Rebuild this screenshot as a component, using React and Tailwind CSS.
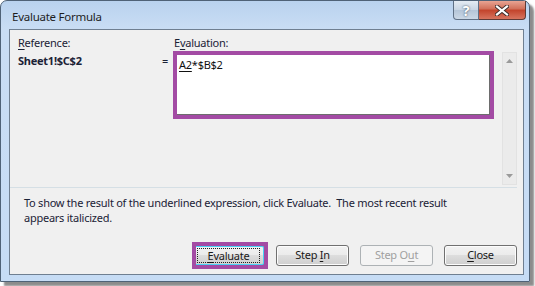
import React from 'react';

const font = { fontFamily: '"Noto Sans", "Open Sans", sans-serif' };

const Btn = ({ children, disabled, focused }) => (
  <div
    className={
      'w-[73px] h-[21px] rounded-[3px] border flex items-center justify-center text-[11px] ' +
      (disabled
        ? 'border-[#adb2b5] bg-[#f4f4f4] text-[#a0a0a0]'
        : focused
        ? 'border-[#3c7fb1] shadow-[inset_0_0_0_1px_#48d3f6] bg-[linear-gradient(#f2f2f2_0%,#ebebeb_50%,#dddddd_50%,#cfcfcf_100%)] text-[#1a1a1a]'
        : 'border-[#707070] shadow-[inset_0_0_0_1px_#fcfcfc] bg-[linear-gradient(#f2f2f2_0%,#ebebeb_50%,#dddddd_50%,#cfcfcf_100%)] text-[#1a1a1a]')
    }
  >
    {focused ? (
      <span className="border border-dotted border-[#222] px-[10px] leading-[13px]">{children}</span>
    ) : (
      <span>{children}</span>
    )}
  </div>
);

export default function App() {
  return (
    <div className="w-[535px] h-[286px] bg-white tracking-[-0.25px]" style={font}>
      <div className="w-[530px] h-[282px] rounded-t-[7px] border border-[#4f6277] bg-[linear-gradient(#b9d2ee_0px,#c9ddf4_28px,#c6dcf5_100%)] shadow-[4px_4px_2px_rgba(0,0,0,0.45)] flex flex-col">
        {/* title bar */}
        <div className="h-[28px] flex items-start justify-between">
          <div className="pl-[11px] pt-[7px] text-[11.5px] text-[#1e1e1e]">Evaluate Formula</div>
          <div className="flex mr-[3px]">
            <div className="w-[26px] h-[19px] rounded-bl-[4px] border border-t-0 border-[#5f7085] bg-[linear-gradient(#e4ebf3,#c8d5e3_50%,#b4c5d8_51%,#cbd8e6)] flex items-center justify-center text-[14px] font-bold text-white [text-shadow:0_0_2px_#2a3a4c]">
              ?
            </div>
            <div className="w-[47px] h-[19px] rounded-br-[4px] border border-l-0 border-t-0 border-[#5f3a36] bg-[linear-gradient(#e8a493,#d06e58_45%,#c2432b_50%,#d7745f)] flex items-center justify-center">
              <svg width="14" height="11" viewBox="0 0 14 11">
                <path d="M2 1.5 L12 9.5 M12 1.5 L2 9.5" stroke="#3a2a28" strokeWidth="4" strokeLinecap="square" />
                <path d="M2 1.5 L12 9.5 M12 1.5 L2 9.5" stroke="#fff" strokeWidth="2.2" strokeLinecap="square" />
              </svg>
            </div>
          </div>
        </div>

        {/* client area */}
        <div className="ml-[8px] mr-[5px] h-[246px] border border-[#6f7f91] bg-[#f0f0f0] flex flex-col text-[11px] text-[#1b2236]">
          <div className="flex pl-[8px] pt-[5px]">
            <div className="w-[144px]">
              <div className="h-[15px] leading-[15px]">
                <span className="underline underline-offset-2">R</span>eference:
              </div>
              <div className="font-bold leading-[15px] mt-[3px]">Sheet1!$C$2</div>
            </div>
            <div className="w-[11px] pt-[18px] leading-[15px]">=</div>
            <div className="flex flex-col">
              <div className="h-[15px] leading-[15px] pl-[1px]">
                E<span className="underline underline-offset-2">v</span>aluation:
              </div>
              <div className="flex mt-[1px]">
                <div className="w-[321px] h-[68px] border-4 border-[#a34ba4] bg-white shadow-[inset_-1px_-1px_0_#6d6d6d]">
                  <div className="pl-[2px] pt-[2px] leading-[15px] text-[#111]">
                    <span className="underline underline-offset-2">A2</span>*$B$2
                  </div>
                </div>
                <div className="ml-[8px] mt-[1px] w-[15px] h-[133px] border border-[#e2e2e2] bg-[#ebebeb] flex flex-col items-center justify-between py-[6px]">
                  <svg width="7" height="4" viewBox="0 0 7 4">
                    <path d="M0 4 L3.5 0 L7 4 Z" fill="#9a9a9a" />
                  </svg>
                  <svg width="7" height="4" viewBox="0 0 7 4">
                    <path d="M0 0 L7 0 L3.5 4 Z" fill="#9a9a9a" />
                  </svg>
                </div>
              </div>
            </div>
          </div>

          <div className="mt-[2px] mr-[6px] h-px bg-[#d5dfe5]" />

          <div className="pl-[14px] pt-[7px] leading-[15px]">
            <div>To show the result of the underlined expression, click Evaluate.&nbsp; The most recent result</div>
            <div>appears italicized.</div>
          </div>

          <div className="mt-auto mb-[8px] mr-[6px] flex justify-end gap-[11px]">
            <div className="relative">
              <Btn focused>
                <span className="underline underline-offset-2">E</span>valuate
              </Btn>
              <div className="absolute left-0 -top-[3px] -right-[3px] -bottom-[3px] border-4 border-[#a34ba4]" />
            </div>
            <Btn>
              Step <span className="underline underline-offset-2">I</span>n
            </Btn>
            <Btn disabled>
              Step O<span className="underline underline-offset-2">u</span>t
            </Btn>
            <Btn>
              <span className="underline underline-offset-2">C</span>lose
            </Btn>
          </div>
        </div>
      </div>
    </div>
  );
}
